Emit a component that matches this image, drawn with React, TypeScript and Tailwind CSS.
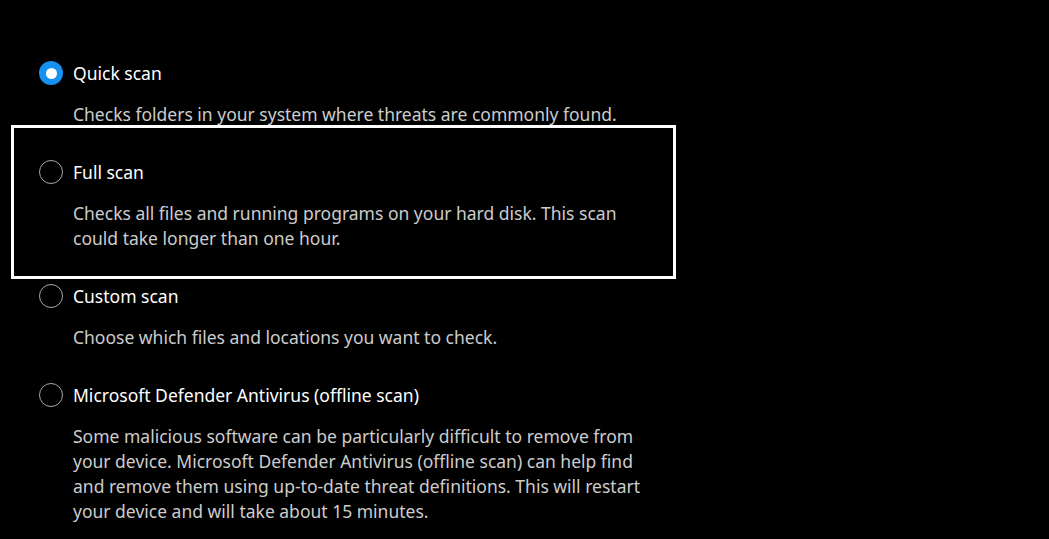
import React from "react";

type Item = { title: string; lines: string[]; selected?: boolean; focused?: boolean };

const items: Item[] = [
  { title: "Quick scan", lines: ["Checks folders in your system where threats are commonly found."], selected: true },
  {
    title: "Full scan",
    lines: ["Checks all files and running programs on your hard disk. This scan", "could take longer than one hour."],
    focused: true,
  },
  { title: "Custom scan", lines: ["Choose which files and locations you want to check."] },
  {
    title: "Microsoft Defender Antivirus (offline scan)",
    lines: [
      "Some malicious software can be particularly difficult to remove from",
      "your device. Microsoft Defender Antivirus (offline scan) can help find",
      "and remove them using up-to-date threat definitions. This will restart",
      "your device and will take about 15 minutes.",
    ],
  },
];

function Radio({ selected }: { selected?: boolean }) {
  if (selected) {
    return (
      <div className="w-[24px] h-[24px] rounded-full bg-[#1591f2] flex items-center justify-center shrink-0">
        <div className="w-[11px] h-[11px] rounded-full bg-white" />
      </div>
    );
  }
  return <div className="w-[24px] h-[24px] rounded-full border-[1.5px] border-[#a8a8a8] shrink-0" />;
}

export default function App() {
  return (
    <div
      className="w-[1049px] h-[539px] bg-black overflow-hidden pt-[41px] pl-[26px]"
      style={{ fontFamily: '"Noto Sans", "Open Sans", sans-serif' }}
    >
      {items.map((it) => (
        <div
          key={it.title}
          className={
            "w-[635px] pl-[13px] pt-[20px] pb-[13.5px] " +
            (it.focused ? "outline-[3px] outline-solid outline-white outline-offset-[12px]" : "")
          }
        >
          <div className="flex items-center gap-[10px] h-[24px]">
            <Radio selected={it.selected} />
            <span className="text-[17.5px] leading-[24px] text-white whitespace-nowrap">{it.title}</span>
          </div>
          <div className="pl-[34px] mt-[16.5px] text-[17.5px] leading-[25px] text-[#cccccc]">
            {it.lines.map((l) => (
              <div key={l} className="whitespace-nowrap">
                {l}
              </div>
            ))}
          </div>
        </div>
      ))}
    </div>
  );
}
